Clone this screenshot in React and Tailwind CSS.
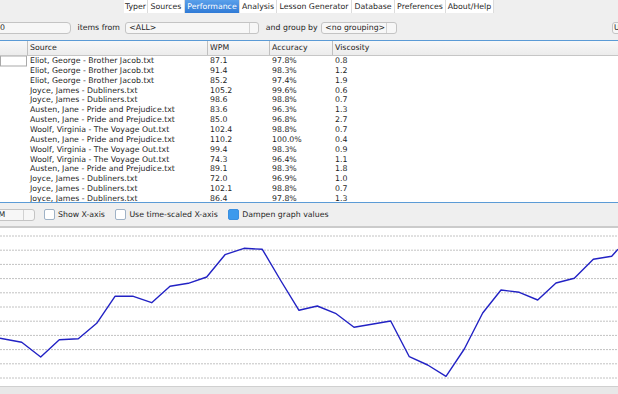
import React from "react";

const rows = [
  ["Eliot, George - Brother Jacob.txt", "87.1", "97.8%", "0.8"],
  ["Eliot, George - Brother Jacob.txt", "91.4", "98.3%", "1.2"],
  ["Eliot, George - Brother Jacob.txt", "85.2", "97.4%", "1.9"],
  ["Joyce, James - Dubliners.txt", "105.2", "99.6%", "0.6"],
  ["Joyce, James - Dubliners.txt", "98.6", "98.8%", "0.7"],
  ["Austen, Jane - Pride and Prejudice.txt", "83.6", "96.3%", "1.3"],
  ["Austen, Jane - Pride and Prejudice.txt", "85.0", "96.8%", "2.7"],
  ["Woolf, Virginia - The Voyage Out.txt", "102.4", "98.8%", "0.7"],
  ["Austen, Jane - Pride and Prejudice.txt", "110.2", "100.0%", "0.4"],
  ["Woolf, Virginia - The Voyage Out.txt", "99.4", "98.3%", "0.9"],
  ["Woolf, Virginia - The Voyage Out.txt", "74.3", "96.4%", "1.1"],
  ["Austen, Jane - Pride and Prejudice.txt", "89.1", "98.3%", "1.8"],
  ["Joyce, James - Dubliners.txt", "72.0", "96.9%", "1.0"],
  ["Joyce, James - Dubliners.txt", "102.1", "98.8%", "0.7"],
  ["Joyce, James - Dubliners.txt", "86.4", "97.8%", "1.3"],
];

const pts = [
  [0, 338.3], [21.7, 342.3], [40.7, 357], [59.3, 339.7], [78.3, 338.7],
  [96.7, 323.3], [115, 296.3], [133.3, 296.3], [151.7, 302.7], [170, 286.3],
  [188.3, 283.3], [206.7, 277], [225, 254.7], [244, 248.3], [262.3, 249.3],
  [280.7, 280.5], [299, 310.3], [317.3, 306], [335.5, 313.3], [354, 327.3],
  [371.7, 324.3], [390.7, 321], [409.3, 356.7], [427.7, 365], [446, 376.3],
  [464.3, 349], [482.7, 313], [501, 290], [519.3, 292.3], [537.7, 300],
  [556, 283], [574.3, 278.3], [593.3, 259.3], [611.7, 256.3], [618, 249.3],
];

const tabs = [
  ["Typer", "w-[24px]"],
  ["Sources", "w-[37px]"],
  ["Performance", "w-[55px]"],
  ["Analysis", "w-[37px]"],
  ["Lesson Generator", "w-[75px]"],
  ["Database", "w-[43px]"],
  ["Preferences", "w-[51px]"],
  ["About/Help", "w-[48px]"],
];

function Combo({ text, className, right }) {
  return (
    <div className={`flex h-[12px] shrink-0 rounded-[3px] border border-[#c4c4c4] bg-[#f7f7f7] ${className}`}>
      <div className="flex-1 overflow-hidden whitespace-nowrap pl-[3px] leading-[10px]">{text}</div>
      <div className={`${right} border-l border-[#d2d2d2]`} />
    </div>
  );
}

function Check({ label, checked, className = "" }) {
  return (
    <div className={`flex items-center shrink-0 ${className}`}>
      <div
        className={`h-[11px] w-[11px] rounded-[2px] border ${
          checked ? "border-[#3a8fe0] bg-[#3d9aec]" : "border-[#9fb2c6] bg-white"
        }`}
      />
      <span className="ml-[3.5px] whitespace-nowrap">{label}</span>
    </div>
  );
}

export default function App() {
  const grid = Array.from({ length: 11 }, (_, i) => 8 + i * 14.2);
  const line = pts.map(([x, y]) => `${x},${y - 228}`).join(" ");
  return (
    <div className="flex h-[394px] w-[618px] flex-col overflow-hidden bg-[#efefef] font-['DejaVu_Sans',sans-serif] text-[7.8px] text-[#1f1f1f]">
      {/* tab bar */}
      <div className="flex h-[13px] shrink-0 justify-center">
        {tabs.map(([t, w]) => (
          <div
            key={t}
            className={`${w} shrink-0 border-r border-[#dcdcdc] text-center leading-[13px] whitespace-nowrap ${
              t === "Performance"
                ? "bg-gradient-to-b from-[#5aa0ea] to-[#2f7ad6] text-white"
                : "bg-white"
            }`}
          >
            {t}
          </div>
        ))}
      </div>

      {/* filter row */}
      <div className="flex h-[27px] shrink-0 items-start pt-[9px]">
        <div className="ml-[-14px] h-[12px] w-[85px] shrink-0 rounded-[4px] border border-[#c4c4c4] bg-[#f7f7f7] pl-[3px] leading-[10px]">
          100
        </div>
        <span className="ml-[6.5px] shrink-0 leading-[12px]">items from</span>
        <Combo text="<ALL>" className="ml-[5.5px] w-[134px]" right="w-[9px]" />
        <span className="ml-[6.5px] shrink-0 leading-[12px]">and group by</span>
        <Combo text="<no grouping>" className="ml-[3.5px] w-[76px]" right="w-[10px]" />
        <div className="ml-auto mr-[-50px] h-[12px] w-[56px] shrink-0 rounded-[3px] border border-[#c4c4c4] bg-[#f7f7f7] pl-[1px] leading-[10px]">
          Update
        </div>
      </div>

      {/* table */}
      <div className="flex h-[163px] shrink-0 flex-col border-y border-[#5b9bd6] bg-white">
        <div className="flex h-[15px] shrink-0 border-b border-[#c6c6c6] bg-gradient-to-b from-[#f8f8f8] to-[#ececec] leading-[14px]">
          <div className="w-[28px] shrink-0 border-r border-[#c0c0c0]" />
          <div className="w-[180px] shrink-0 border-r border-[#c0c0c0] pl-[2px]">Source</div>
          <div className="w-[62px] shrink-0 border-r border-[#c0c0c0] pl-[2px]">WPM</div>
          <div className="w-[63px] shrink-0 border-r border-[#c0c0c0] pl-[2px]">Accuracy</div>
          <div className="flex-1 pl-[2px]">Viscosity</div>
        </div>
        <div className="flex-1 overflow-hidden">
          {rows.map((r, i) => (
            <div key={i} className="flex h-[9.87px] leading-[9.87px] whitespace-nowrap">
              <div className="w-[28px] shrink-0">
                {i === 0 && (
                  <div className="h-[10.5px] w-[27px] -translate-y-[0.5px] border border-[#a9a9a9] bg-white" />
                )}
              </div>
              <div className="w-[180px] shrink-0 pl-[2px]">{r[0]}</div>
              <div className="w-[62px] shrink-0 pl-[2px]">{r[1]}</div>
              <div className="w-[63px] shrink-0 pl-[2px]">{r[2]}</div>
              <div className="flex-1 pl-[2px]">{r[3]}</div>
            </div>
          ))}
        </div>
      </div>

      {/* controls row */}
      <div className="flex h-[23px] shrink-0 items-center">
        <Combo text="WPM" className="ml-[-18px] w-[53px]" right="w-[11px]" />
        <Check label="Show X-axis" className="ml-[8.5px]" />
        <Check label="Use time-scaled X-axis" className="ml-[10px]" />
        <Check label="Dampen graph values" checked className="ml-[10px]" />
      </div>

      {/* graph */}
      <div className="h-[160px] shrink-0 border-t-2 border-[#cbcbcb] bg-white">
        <svg width="618" height="158" viewBox="0 0 618 158" className="block">
          {grid.map((y, i) => (
            <line
              key={i}
              x1="0"
              x2="618"
              y1={y}
              y2={y}
              stroke="#c2c2c2"
              strokeWidth="1"
              strokeDasharray="2 1"
            />
          ))}
          <polyline points={line} fill="none" stroke="#2222c4" strokeWidth="1.4" strokeLinejoin="round" />
        </svg>
      </div>
      <div className="flex-1 border-t border-[#d0d0d0] bg-[#e8e8e8]" />
    </div>
  );
}
